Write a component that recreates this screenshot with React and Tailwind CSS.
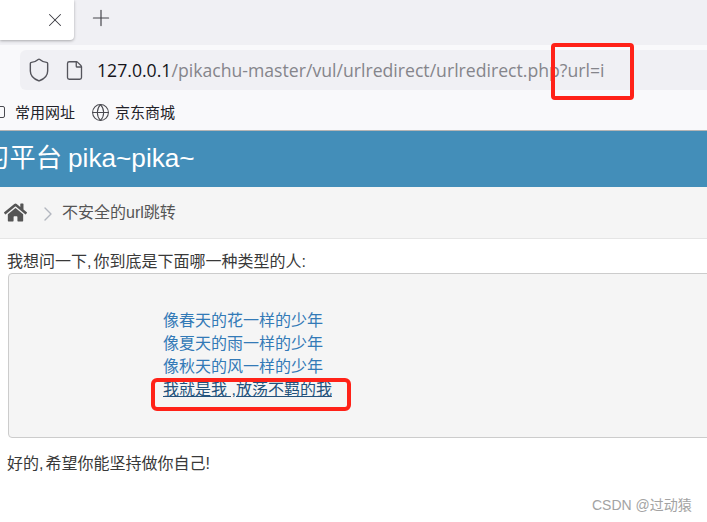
import { X, Plus, Shield, File, Globe, ChevronRight } from "lucide-react";
import { FaHome } from "react-icons/fa";

const cjk = "font-['Noto_Sans_CJK_SC','Liberation_Sans',sans-serif]";
const page = "font-['Liberation_Sans','Noto_Sans_CJK_SC',sans-serif]";

const links = ["像春天的花一样的少年", "像夏天的雨一样的少年", "像秋天的风一样的少年"];

const App = () => {
  return (
    <div className={`relative h-[522px] w-[707px] overflow-hidden bg-white ${cjk}`}>
      {/* Tabs */}
      <div className="flex h-[45px] bg-[#f0f0f4]">
        <div className="flex h-[40px] w-[74px] items-center justify-end rounded-br-[4px] bg-white pr-[8px] shadow-[0_1px_3px_rgba(0,0,0,0.3)]">
          <X size={22} strokeWidth={1.1} className="text-[#3a3a40]" />
        </div>
        <div className="ml-[14px] flex h-[36px] items-center">
          <Plus size={26} strokeWidth={1.1} className="text-[#45454a]" />
        </div>
      </div>

      {/* Address bar */}
      <div className="h-[85px] bg-[#f9f9fb]">
        <div className="relative top-[5px] ml-[20px] flex h-[40px] items-center rounded-l-[6px] bg-[#f0f0f4] pl-[6px]">
          <Shield size={26} strokeWidth={1.3} className="text-[#55555c]" />
          <File size={21} strokeWidth={1.5} className="ml-[12px] text-[#55555c]" />
          <span className="ml-[12px] whitespace-nowrap font-['Open_Sans',sans-serif] text-[17.65px] text-[#15141a]">
            127.0.0.1
            <span className="text-[#85858b]">/pikachu-master/vul/urlredirect/urlredirect.php?url=i</span>
          </span>
        </div>
        <div className="mt-[8px] flex h-[28px] items-center text-[15px] text-[#222228] relative top-[5px]">
          <div className="ml-[-5px] h-[12px] w-[10px] rounded-[2px] border border-[#4a4a50]" />
          <span className="ml-[10px]">常用网址</span>
          <Globe size={19} strokeWidth={1.3} className="ml-[16px] text-[#4a4a50]" />
          <span className="ml-[5px]">京东商城</span>
        </div>
      </div>

      {/* Blue header */}
      <div className={`h-[57px] overflow-hidden border-t border-[#b5b5b5] bg-[#438eb9] ${page}`}>
        <div className="ml-[-4px] flex h-full items-center whitespace-nowrap text-[26.2px] text-white">
          <span className="w-[66px] overflow-hidden text-right [direction:rtl]">习平台</span>
          <span className="ml-[6px]">pika~pika~</span>
        </div>
      </div>

      {/* Breadcrumb */}
      <div className={`flex h-[52px] items-center border-b border-[#e5e5e5] bg-[#f5f5f5] ${page}`}>
        <FaHome size={23} className="ml-[4px] text-[#555555]" />
        <ChevronRight size={24} strokeWidth={1.4} className="ml-[9px] mt-[2px] text-[#b2b6bf]" />
        <span className="ml-[2px] text-[16px] text-[#555555]">不安全的url跳转</span>
      </div>

      {/* Content */}
      <div className={`px-[8px] pt-[13px] text-[16px] text-[#393939] ${page}`}>
        <p className="ml-[-1px] leading-[20px]">
          我想问一下<span className="tracking-[2px]">,</span>你到底是下面哪一种类型的人<span className="tracking-[2px]">:</span>
        </p>
        <div className="mt-[1px] h-[165px] w-[720px] rounded-[4px] border border-[#cccccc] bg-[#f5f5f5] pl-[154px] pt-[35px]">
          {links.map((t) => (
            <a key={t} className="block h-[23px] leading-[23px] text-[#337ab7]">
              {t}
            </a>
          ))}
          <a className="block h-[23px] leading-[23px] text-[#23527c] underline">我就是我 ,放荡不羁的我</a>
        </div>
        <p className="ml-[-1px] mt-[16px] leading-[20px]">
          好的<span className="tracking-[2px]">,</span>希望你能坚持做你自己!
        </p>
      </div>

      {/* Watermark */}
      <span className={`absolute left-[592px] top-[495px] text-[14px] leading-[20px] text-[#a3a3a3] ${page}`}>CSDN @过动猿</span>

      {/* Red annotations */}
      <div className="absolute left-[551px] top-[43px] h-[57px] w-[83px] rounded-[4px] border-[4px] border-[#ff2218]" />
      <div className="absolute left-[151px] top-[378px] h-[33px] w-[200px] rounded-[6px] border-[4px] border-[#ff2218]" />
    </div>
  );
};

export default App;
